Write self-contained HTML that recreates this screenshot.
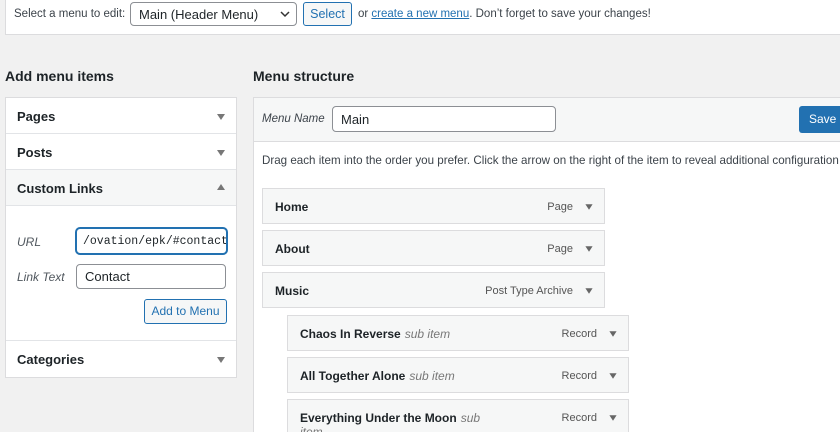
<!DOCTYPE html>
<html><head><style>
*{box-sizing:border-box;margin:0;padding:0}
html,body{width:840px;height:432px;overflow:hidden}
body{background:#f1f1f1;font-family:"Liberation Sans",sans-serif;font-size:12px;color:#1d2327;position:relative}
.a{position:absolute}
.tri{position:absolute;width:0;height:0;border-left:4px solid transparent;border-right:4px solid transparent;border-top:6px solid #777}
.up{border-top:none;border-bottom:6px solid #777}
.inp{position:absolute;background:#fff;border:1px solid #8c8f94;border-radius:4px;font-size:13px;padding-left:8px;display:flex;align-items:center;overflow:hidden;white-space:nowrap}
.row{position:absolute;left:0;width:230px;height:36px;border-bottom:1px solid #e2e4e7;font-weight:bold;font-size:13px;padding:11px 0 0 11px;background:#fff}
.it{position:absolute;background:#f6f7f7;border:1px solid #dcdcde;height:36px;font-weight:bold;font-size:12px;padding:11px 0 0 12px}
.it .t{position:absolute;right:31px;top:12px;font-weight:normal;color:#555;font-size:11px}
.it .tri{right:11px;top:15px;border-top-color:#666;transform:scale(.9)}
.it i{font-weight:normal;color:#777;margin-left:4px}
</style></head><body>
<div class="a" style="left:5px;top:-1px;width:835px;height:36px;background:#fff;border:1px solid #dcdcde;border-right:none"></div>
<div class="a" style="left:14px;top:8px;font-size:11.5px;color:#3c434a">Select a menu to edit:</div>
<div class="inp" style="left:130px;top:2px;width:167px;height:24px;font-size:13px">Main (Header Menu)</div>
<svg class="a" style="left:280px;top:10px" width="10" height="8"><path d="M1 2l4 4 4-4" stroke="#333" stroke-width="1.5" fill="none"/></svg>
<div class="a" style="left:303px;top:2px;width:49px;height:24px;border:1px solid #2271b1;border-radius:3px;background:#f6f7f7;color:#2271b1;font-size:12.5px;text-align:center;line-height:22px">Select</div>
<div class="a" style="left:358px;top:8px;color:#3c434a;font-size:11.5px">or <span style="color:#2271b1;text-decoration:underline">create a new menu</span>. Don’t forget to save your changes!</div>

<div class="a" style="left:5px;top:68px;font-size:14px;font-weight:600">Add menu items</div>
<div class="a" style="left:253px;top:68px;font-size:14px;font-weight:600">Menu structure</div>

<div class="a" style="left:5px;top:97px;width:232px;height:281px;background:#fff;border:1px solid #dcdcde">
<div class="row" style="top:0">Pages<span class="tri" style="left:211px;top:16px"></span></div>
<div class="row" style="top:36px">Posts<span class="tri" style="left:211px;top:16px"></span></div>
<div class="row" style="top:72px;background:#f6f7f7">Custom Links<span class="tri up" style="left:211px;top:14px"></span></div>
<div class="a" style="left:11px;top:137px;font-style:italic;color:#50575e">URL</div>
<div class="inp" style="left:70px;top:130px;width:151px;height:26px;border-color:#2271b1;box-shadow:0 0 0 1px #2271b1;font-family:'Liberation Mono',monospace;font-size:11.5px;padding-left:6px">/ovation/epk/#contact</div>
<div class="a" style="left:11px;top:172px;font-style:italic;color:#50575e">Link Text</div>
<div class="inp" style="left:70px;top:166px;width:150px;height:25px">Contact</div>
<div class="a" style="left:138px;top:201px;width:83px;height:25px;border:1px solid #2271b1;border-radius:3px;background:#f6f7f7;color:#2271b1;font-size:12px;text-align:center;line-height:23px">Add to Menu</div>
<div class="row" style="top:242px;height:36px;border-top:1px solid #e2e4e7;border-bottom:none">Categories<span class="tri" style="left:211px;top:16px"></span></div>
</div>

<div class="a" style="left:253px;top:97px;width:587px;height:340px;background:#fff;border:1px solid #dcdcde;border-right:none;overflow:hidden">
<div class="a" style="left:0;top:0;width:600px;height:44px;background:#f6f7f7;border-bottom:1px solid #dcdcde"></div>
<div class="a" style="left:8px;top:15px;font-style:italic;color:#3c434a;font-size:11.5px">Menu Name</div>
<div class="inp" style="left:78px;top:8px;width:224px;height:26px">Main</div>
<div class="a" style="left:545px;top:8px;width:60px;height:27px;background:#2271b1;border-radius:3px;color:#fff;font-size:12px;line-height:27px;padding-left:10px;white-space:nowrap">Save Menu</div>
<div class="a" style="left:8px;top:56px;color:#3c434a;white-space:nowrap;font-size:11.6px">Drag each item into the order you prefer. Click the arrow on the right of the item to reveal additional configuration options.</div>
</div>

<div class="it" style="left:262px;top:188px;width:343px">Home<span class="t">Page</span><span class="tri"></span></div>
<div class="it" style="left:262px;top:230px;width:343px">About<span class="t">Page</span><span class="tri"></span></div>
<div class="it" style="left:262px;top:272px;width:343px">Music<span class="t">Post Type Archive</span><span class="tri"></span></div>
<div class="it" style="left:287px;top:315px;width:342px">Chaos In Reverse<i>sub item</i><span class="t">Record</span><span class="tri"></span></div>
<div class="it" style="left:287px;top:357px;width:342px">All Together Alone<i>sub item</i><span class="t">Record</span><span class="tri"></span></div>
<div class="it" style="left:287px;top:399px;width:342px;height:40px">Everything Under the Moon<i>sub</i><br><i style="margin:0">item</i><span class="t">Record</span><span class="tri"></span></div>
</body></html>
